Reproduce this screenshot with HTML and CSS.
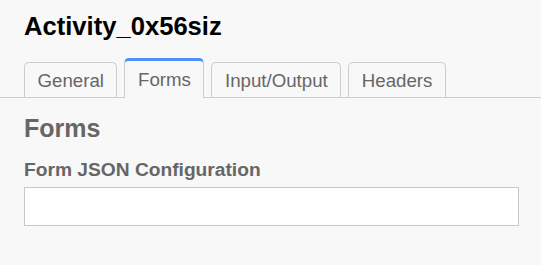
FILE: index.html
```html
<!DOCTYPE html>
<html>
<head>
<meta charset="utf-8">
<link rel="stylesheet" href="styles.css">
</head>
<body>
<div class="panel">
  <div class="header">
    <div class="title">Activity_0x56siz</div>
  </div>
  <div class="tabs">
    <div class="tab">General</div>
    <div class="tab active">Forms</div>
    <div class="tab">Input/Output</div>
    <div class="tab">Headers</div>
  </div>
  <div class="content">
    <div class="group-title">Forms</div>
    <label class="field-label">Form JSON Configuration</label>
    <input class="field-input" type="text">
  </div>
</div>
</body>
</html>
```
FILE: styles.css
```css
html, body {
  margin: 0;
  padding: 0;
  background: #f8f8f8;
  font-family: "Liberation Sans", Arial, sans-serif;
}
.panel {
  width: 541px;
  height: 265px;
  background: #f8f8f8;
}
.header {
  padding: 11px 24px 0 24px;
}
.title {
  font-size: 25.6px;
  line-height: 30px;
  font-weight: bold;
  color: #000;
}
.tabs {
  display: flex;
  align-items: flex-end;
  gap: 7px;
  padding-left: 24px;
  margin-top: 17px;
  border-bottom: 1px solid #cccccc;
  height: 40px;
  box-sizing: border-box;
}
.tab {
  height: 35px;
  box-sizing: border-box;
  padding: 0 12.5px;
  border: 1px solid #cccccc;
  border-bottom: none;
  border-radius: 5px 5px 0 0;
  font-size: 18.7px;
  line-height: 35px;
  color: #666666;
  background: #f8f8f8;
}
.tab.active {
  height: 40px;
  margin-bottom: -1px;
  border-top: 3px solid #4d8ffb;
  line-height: 37px;
}
.content {
  padding: 0 22px 0 24px;
  display: flex;
  flex-direction: column;
}
.group-title {
  margin-top: 15px;
  font-size: 25px;
  line-height: 30px;
  font-weight: bold;
  color: #666666;
}
.field-label {
  margin-top: 16px;
  font-size: 19.2px;
  line-height: 22px;
  font-weight: bold;
  color: #666666;
}
.field-input {
  margin: 6px 0 0 0;
  height: 39px;
  box-sizing: border-box;
  border: 1px solid #c8c8c8;
  background: #ffffff;
  padding: 0 8px;
  font-family: "Liberation Sans", Arial, sans-serif;
  font-size: 18.7px;
  outline: none;
}
```
